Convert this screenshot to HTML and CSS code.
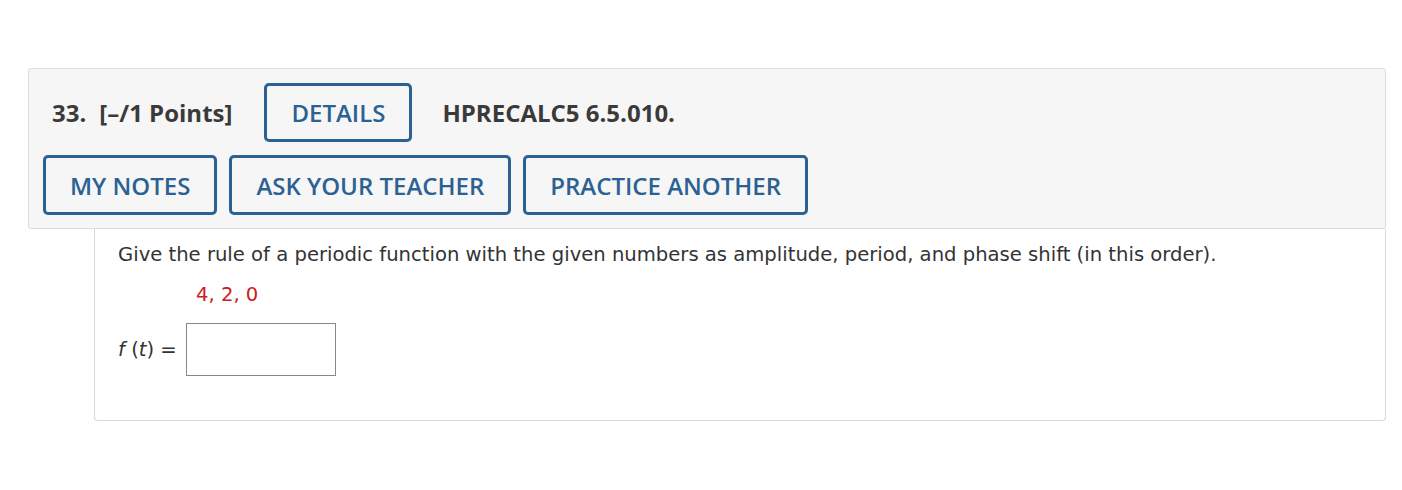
FILE: index.html
```html
<!DOCTYPE html>
<html lang="en">
<head>
    <meta charset="utf-8">
    <title>Question 33</title>
    <link rel="stylesheet" href="styles.css">
</head>
<body>
    <div class="question">
        <!-- Cabecera de la pregunta -->
        <div class="q-header">
            <div class="q-row">
                <span class="q-num">33.</span>
                <span class="q-points">[&ndash;/1 Points]</span>
                <button class="q-btn" type="button">DETAILS</button>
                <span class="q-ref">HPRECALC5 6.5.010.</span>
            </div>
            <div class="q-actions">
                <button class="q-btn" type="button">MY NOTES</button>
                <button class="q-btn" type="button">ASK YOUR TEACHER</button>
                <button class="q-btn" type="button">PRACTICE ANOTHER</button>
            </div>
        </div>
        <!-- Cuerpo de la pregunta -->
        <div class="q-body">
            <p class="q-text">Give the rule of a periodic function with the given numbers as amplitude, period, and phase shift (in this order).</p>
            <p class="q-values">4, 2, 0</p>
            <div class="q-answer">
                <span class="q-label"><i>f</i> (<i>t</i>) =</span>
                <input type="text" class="q-input">
            </div>
        </div>
    </div>
</body>
</html>
```
FILE: styles.css
```css
/* Estilos generales */
body {
    margin: 0;
    background-color: #fff;
    font-family: "DejaVu Sans", Verdana, sans-serif;
    color: #333;
}

.question {
    padding: 68px 16px 0 28px;
}

/* Cabecera */
.q-header {
    background-color: #f6f6f6;
    border: 1px solid #dcdcdc;
    border-radius: 3px;
    padding: 14px 14px 13px 14px;
    font-family: "Open Sans", sans-serif;
}

.q-row {
    display: flex;
    align-items: center;
    padding-left: 9px;
}

.q-num,
.q-points,
.q-ref {
    font-size: 24px;
    font-weight: 700;
    color: #3a3a3a;
}

.q-points {
    margin-left: 13px;
    margin-right: 32px;
}

.q-ref {
    margin-left: 30px;
}

.q-actions {
    display: flex;
    gap: 12px;
    margin-top: 13px;
}

.q-btn {
    height: 60px;
    padding: 0 24px;
    background-color: transparent;
    border: 3px solid #2b6193;
    border-radius: 5px;
    color: #2b6193;
    font-family: "Open Sans", sans-serif;
    font-size: 24px;
    font-weight: 600;
    cursor: pointer;
}

.q-row .q-btn {
    height: 59px;
}

/* Cuerpo */
.q-body {
    margin-left: 66px;
    border: 1px solid #d8d8d8;
    border-top: none;
    border-radius: 0 0 4px 4px;
    padding: 13px 23px 42px 23px;
    height: 136px;
}

.q-text {
    margin: 0;
    font-size: 19.6px;
    line-height: 26px;
}

.q-values {
    margin: 14px 0 0 78px;
    font-size: 19.6px;
    line-height: 26px;
    color: #cc2020;
}

.q-answer {
    display: flex;
    align-items: center;
    margin-top: 15px;
}

.q-label {
    font-size: 19.6px;
    margin-right: 9px;
}

.q-input {
    width: 148px;
    height: 51px;
    padding: 0;
    border: 1px solid #888;
}
```
